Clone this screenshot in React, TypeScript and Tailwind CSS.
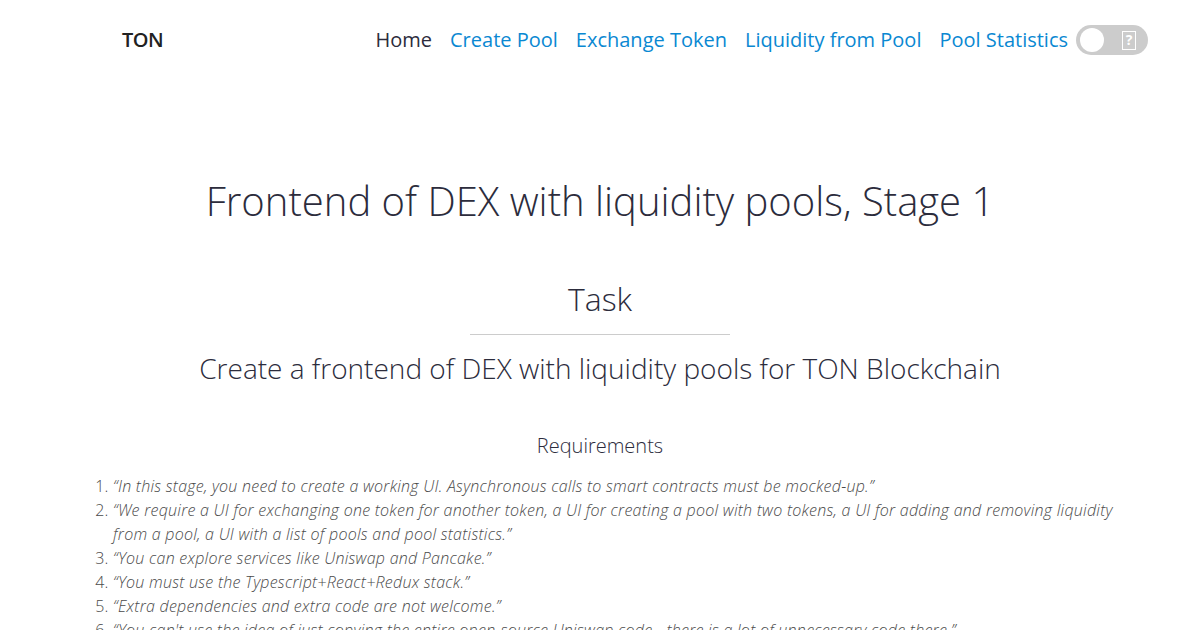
const navLinks = ["Create Pool", "Exchange Token", "Liquidity from Pool", "Pool Statistics"];

const requirements = [
  "In this stage, you need to create a working UI. Asynchronous calls to smart contracts must be mocked-up.",
  "We require a UI for exchanging one token for another token, a UI for creating a pool with two tokens, a UI for adding and removing liquidity from a pool, a UI with a list of pools and pool statistics.",
  "You can explore services like Uniswap and Pancake.",
  "You must use the Typescript+React+Redux stack.",
  "Extra dependencies and extra code are not welcome.",
  "You can't use the idea of just copying the entire open-source Uniswap code - there is a lot of unnecessary code there.",
];

function ThemeToggle() {
  return (
    <div className="-ml-[10px] flex h-[30px] w-[72px] items-center justify-between rounded-full bg-[#cccccc] pl-1 pr-3">
      <div className="h-[24px] w-[24px] rounded-full bg-white" />
      <span className="flex h-[19px] w-[14px] items-center justify-center border border-white text-[14px] font-bold leading-none text-white">
        ?
      </span>
    </div>
  );
}

export default function App() {
  return (
    <div className="min-h-[630px] bg-white font-['Open_Sans',sans-serif] text-[#2c2c3c]">
      <header className="flex h-[80px] items-center justify-between pl-[122px] pr-[52px]">
        <div className="text-[20px] font-semibold tracking-tight text-[#222]">TON</div>
        <nav className="flex items-center gap-[18px] text-[20px]">
          <a className="text-[#2c2c3c]">Home</a>
          {navLinks.map((l) => (
            <a key={l} className="text-[#0a88d2]">
              {l}
            </a>
          ))}
          <ThemeToggle />
        </nav>
      </header>

      <main className="flex flex-col items-center">
        <h1 className="mt-[95px] text-[40px] font-light leading-[52px]">Frontend of DEX with liquidity pools, Stage 1</h1>

        <h2 className="mt-[52px] text-[32px] font-light leading-[40px]">Task</h2>
        <hr className="mt-[15px] w-[260px] border-t border-[#cccccc]" />
        <p className="mt-[14px] text-[28px] font-light leading-[38px]">Create a frontend of DEX with liquidity pools for TON Blockchain</p>

        <h3 className="mt-[45px] text-[20px] font-light leading-[28px]">Requirements</h3>

        <ol className="ml-[93px] mt-[14px] w-[1040px] self-start list-decimal pl-5 text-[16px] font-light leading-[24px] tracking-[0.25px] text-[#4a4a4a]">
          {requirements.map((r) => (
            <li key={r}>
              <i>“{r}”</i>
            </li>
          ))}
        </ol>
      </main>
    </div>
  );
}
